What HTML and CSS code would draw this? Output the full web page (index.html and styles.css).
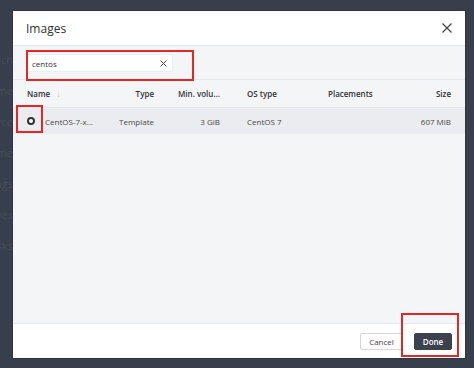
FILE: index.html
```html
<!DOCTYPE html>
<html lang="en">
<head>
  <meta charset="UTF-8">
  <meta name="viewport" content="width=device-width, initial-scale=1.0">
  <title>Images</title>
  <link rel="stylesheet" href="styles.css">
</head>
<body>
  <!-- page behind the modal -->
  <div class="backdrop">
    <div class="bg-line">Search</div>
    <div class="bg-line">Name</div>
    <div class="bg-line">Source</div>
    <div class="bg-line">Volume</div>
    <div class="bg-line">Settings</div>
    <div class="bg-line">Drives</div>
    <div class="bg-line">Disks</div>
  </div>

  <div class="modal">
    <div class="modal-header">
      <h1>Images</h1>
      <button class="close-btn" aria-label="Close">
        <svg width="10" height="10" viewBox="0 0 10 10"><path d="M0.5 0.5L9.5 9.5M9.5 0.5L0.5 9.5" stroke="#444" stroke-width="1.2" fill="none"/></svg>
      </button>
    </div>

    <div class="modal-body">
      <div class="toolbar">
        <div class="search">
          <input type="text" value="centos">
          <svg width="7" height="7" viewBox="0 0 7 7"><path d="M0.5 0.5L6.5 6.5M6.5 0.5L0.5 6.5" stroke="#444" stroke-width="1" fill="none"/></svg>
        </div>
      </div>

      <div class="table">
        <div class="row head">
          <div class="cell">Name <span class="sort">↓</span></div>
          <div class="cell right">Type</div>
          <div class="cell right"><span class="clip minvol">Min. volume size</span></div>
          <div class="cell os">OS type</div>
          <div class="cell">Placements</div>
          <div class="cell right">Size</div>
        </div>
        <div class="row selected">
          <div class="cell name">
            <span class="radio"></span>
            <span class="clip imgname">CentOS-7-x86_64-GenericCloud</span>
          </div>
          <div class="cell right">Template</div>
          <div class="cell right">3 GiB</div>
          <div class="cell os">CentOS 7</div>
          <div class="cell"></div>
          <div class="cell right">607 MiB</div>
        </div>
      </div>
    </div>

    <div class="modal-footer">
      <button class="btn">Cancel</button>
      <button class="btn primary">Done</button>
    </div>

    <!-- red annotation boxes -->
    <div class="mark mark-search"></div>
    <div class="mark mark-radio"></div>
    <div class="mark mark-done"></div>
  </div>
</body>
</html>
```

FILE: styles.css
```css
body {
  margin: 0;
  width: 474px;
  height: 368px;
  overflow: hidden;
  background: #383f4c;
  font-family: "Open Sans", "Liberation Sans", sans-serif;
  color: #333;
  position: relative;
}
.backdrop {
  width: 13px;
  overflow: hidden;
  padding: 52px 0 0 0;
  display: flex;
  flex-direction: column;
  gap: 16px;
}
.bg-line {
  font-size: 11px;
  color: #464d5a;
  white-space: nowrap;
  direction: rtl;
}
.modal {
  position: absolute;
  left: 13px;
  top: 11px;
  width: 452px;
  height: 347px;
  background: #f4f5f7;
  display: flex;
  flex-direction: column;
  box-shadow: 0 0 0 1px rgba(0, 0, 0, 0.15);
}
.modal-header {
  height: 35px;
  background: #fff;
  border-bottom: 1px solid #e6e8eb;
  box-sizing: border-box;
  display: flex;
  align-items: center;
  justify-content: space-between;
  padding: 0 12px 0 13px;
}
h1 {
  margin: 0;
  font-size: 12px;
  font-weight: 400;
  color: #333;
}
.close-btn {
  border: 0;
  background: none;
  padding: 0;
  width: 12px;
  height: 12px;
  display: flex;
  align-items: center;
  justify-content: center;
}
.modal-body {
  flex: 1;
}
.toolbar {
  height: 34px;
  box-sizing: border-box;
  border-bottom: 1px solid #e6e8eb;
  padding: 8px 0 0 14px;
}
.search {
  width: 146px;
  height: 18px;
  background: #fff;
  border: 1px solid #eceef0;
  box-sizing: border-box;
  display: flex;
  align-items: center;
  padding: 0 5px 0 4px;
}
.search input {
  flex: 1;
  min-width: 0;
  border: 0;
  outline: none;
  padding: 0;
  font-family: inherit;
  font-size: 8px;
  color: #333;
  background: transparent;
}
.row {
  display: grid;
  grid-template-columns: 76px 51px 66px 108px 72px 51px;
  padding: 0 14px;
  align-items: center;
  font-size: 8px;
}
.row.head {
  height: 27px;
  font-weight: 600;
  color: #333;
  border-bottom: 1px solid #e6e8eb;
}
.row.selected {
  height: 26px;
  background: #ebecef;
  color: #4a4a4a;
}
.cell {
  white-space: nowrap;
}
.right {
  text-align: right;
}
.os {
  padding-left: 27px;
}
.sort {
  color: #bbb;
  font-weight: 400;
  margin-left: 4px;
}
.clip {
  display: inline-block;
  overflow: hidden;
  text-overflow: ellipsis;
  vertical-align: bottom;
}
.minvol {
  width: 42px;
}
.name {
  display: flex;
  align-items: center;
  gap: 10px;
}
.imgname {
  width: 51px;
}
.radio {
  width: 8px;
  height: 8px;
  border-radius: 50%;
  background: #fff;
  border: 2.5px solid #333;
  box-sizing: border-box;
  flex: none;
}
.modal-footer {
  height: 35px;
  background: #fff;
  border-top: 1px solid #e6e8eb;
  box-sizing: border-box;
  display: flex;
  align-items: center;
  justify-content: flex-end;
  gap: 11px;
  padding: 0 13px 0 0;
}
.btn {
  height: 17px;
  padding: 0 6px;
  font-family: inherit;
  font-size: 8px;
  border: 1px solid #d3d6da;
  border-radius: 2px;
  background: #fff;
  color: #444;
}
.btn:first-child {
  width: 43px;
}
.btn.primary {
  width: 38px;
  background: #3b424e;
  border-color: #3b424e;
  color: #fff;
  font-weight: 600;
}
.mark {
  position: absolute;
  border: 2px solid #e02828;
  box-sizing: border-box;
}
.mark-search {
  left: 13px;
  top: 39px;
  width: 168px;
  height: 31px;
}
.mark-radio {
  left: 3px;
  top: 94px;
  width: 27px;
  height: 28px;
}
.mark-done {
  left: 388px;
  top: 302px;
  width: 58px;
  height: 44px;
}
```
